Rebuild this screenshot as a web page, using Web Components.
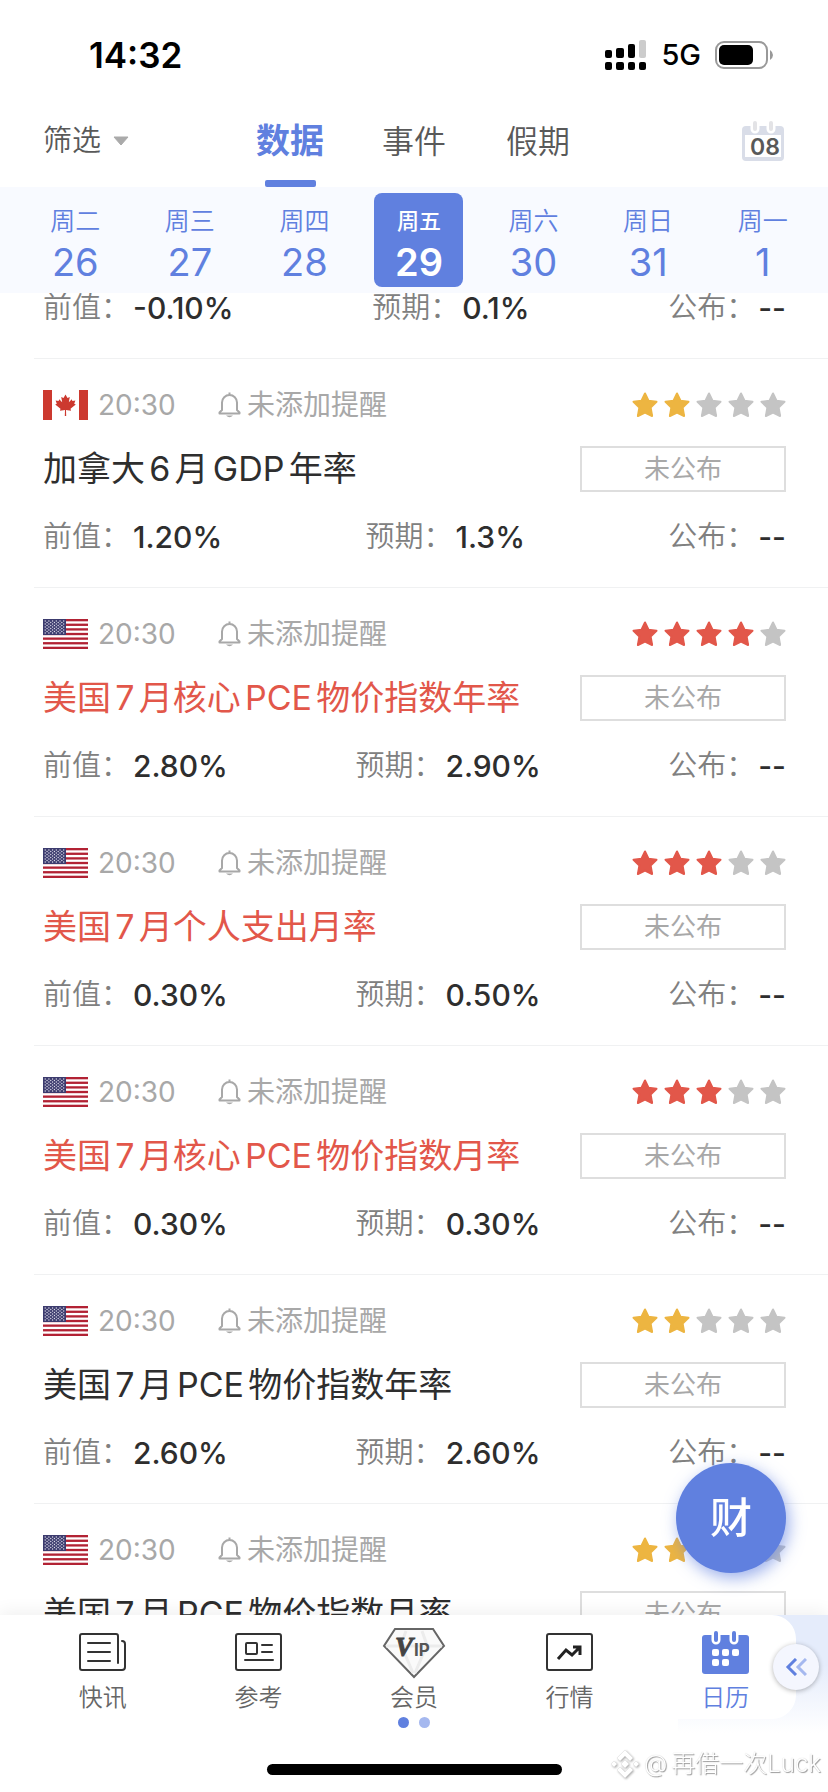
<!DOCTYPE html>
<html lang="zh-CN">
<head>
<meta charset="utf-8">
<meta name="viewport" content="width=device-width, initial-scale=1">
<title>财经日历</title>
<style>
  html, body { margin: 0; height: 100%; }
  body {
    background: #fff; color: #2e2e2e;
    font-family: "Inter", "Noto Sans CJK SC", sans-serif;
    --blue: #6080df; --red: #e2574a; --gold: #edb541; --muted: #a8a8a8;
  }
</style>
</head>
<body>
<calendar-app></calendar-app>

<script>
const define = (name, html, setup) => {
  const template = document.createElement('template');
  template.innerHTML = '<style>*{box-sizing:border-box}button,a{font:inherit;color:inherit;background:none;border:0;padding:0;margin:0;text-decoration:none}svg{display:block}</style>' + html;
  customElements.define(name, class extends HTMLElement {
    constructor() {
      super();
      this.attachShadow({ mode: 'open' }).append(template.content.cloneNode(true));
    }
    connectedCallback() { if (setup) setup(this, this.shadowRoot); }
  });
};

define('status-bar', `
<style>
  :host { display: flex; justify-content: space-between; align-items: center; height: 94px; padding: 16px 55px 0 89px; color: #000; }
  .time { font-size: 35px; font-weight: 600; line-height: 40px; }
  .right { display: flex; align-items: center; gap: 14px; font-size: 29px; font-weight: 500; line-height: 40px; }
</style>
<span class="time">14:32</span>
<span class="right">
  <svg width="42" height="30" viewBox="0 0 42 30" aria-hidden="true">
    <g><rect x="0" y="10" width="7" height="8" rx="2"/><rect x="11" y="8" width="8" height="10" rx="2"/><rect x="23" y="4" width="7" height="14" rx="2"/><rect x="34" y="0" width="7" height="18" rx="2" fill="#ccc"/>
    <rect x="0" y="22" width="7" height="8" rx="2"/><rect x="11" y="22" width="8" height="8" rx="2"/><rect x="23" y="22" width="7" height="8" rx="2"/><rect x="34" y="22" width="7" height="8" rx="2"/></g>
  </svg>
  <span>5G</span>
  <svg width="58" height="28" viewBox="0 0 58 28" aria-hidden="true">
    <rect x="1" y="1" width="51" height="26" rx="8" fill="none" stroke="#999" stroke-width="2"/>
    <rect x="4" y="4" width="34" height="20" rx="5"/><path d="M55 9v10q3-2 3-5t-3-5z" fill="#999"/>
  </svg>
</span>`);

define('top-tabs', `
<style>
  :host { display: grid; grid-template-columns: 1fr 372px 1fr; align-items: center; height: 93px; padding: 0 43px; color: #595959; }
  .filter { justify-self: start; display: flex; align-items: center; gap: 12px; font-size: 29px; font-weight: 350; line-height: 40px; }
  .tabs { display: grid; grid-template-columns: repeat(3, 1fr); align-self: stretch; font-size: 32px; font-weight: 350; }
  .tabs button { position: relative; padding-bottom: 4px; }
  .tabs .on { color: var(--blue); font-size: 34px; font-weight: 600; }
  .tabs .on::after { content: ""; position: absolute; left: 50%; bottom: 0; width: 51px; height: 7px; margin-left: -25px; border-radius: 2px; background: var(--blue); }
  .cal { justify-self: end; }
  text { font: 600 23px "Inter", sans-serif; fill: #595959; }
</style>
<button class="filter">筛选<svg width="16" height="10" viewBox="0 0 16 10"><path d="M1 1h14L8 9z" fill="#aaa" stroke="#aaa" stroke-linejoin="round"/></svg></button>
<div class="tabs" role="tablist">
  <button class="on" role="tab" aria-selected="true">数据</button><button role="tab">事件</button><button role="tab">假期</button>
</div>
<button class="cal" aria-label="今天">
  <svg width="44" height="42" viewBox="0 0 44 42">
    <rect x="1" y="6" width="42" height="35" rx="4" fill="#d9dde8"/><rect x="4" y="15" width="36" height="22" fill="#fff"/>
    <path d="M14 0v9M30 0v9" stroke="#fff" stroke-width="9" stroke-linecap="round"/>
    <path d="M14 3v6M30 3v6" stroke="#e3e3e6" stroke-width="4" stroke-linecap="round"/>
    <text x="24" y="35" text-anchor="middle">08</text>
  </svg>
</button>`);

define('day-cell', `
<style>
  :host { display: flex; justify-content: center; color: var(--blue); }
  button { width: 89px; height: 94px; padding-top: 4px; border-radius: 8px; display: flex; flex-direction: column; align-items: center; justify-content: center; }
  .w { font-size: 25px; font-weight: 350; line-height: 40px; }
  .d { font-size: 38px; line-height: 42px; }
  :host([selected]) button { background: var(--blue); color: #fff; }
  :host([selected]) .w { font-size: 22px; font-weight: 500; }
  :host([selected]) .d { font-weight: 600; }
</style>
<button><span class="w"><slot name="week"></slot></span><span class="d"><slot></slot></span></button>`);

define('day-strip', `
<style>
  :host { display: grid; grid-template-columns: repeat(7, 1fr); align-items: center; height: 106px; padding: 0 8px 0 18px; background: #f8faff; }
</style>
<slot></slot>`);

const STAR = '<svg width="26" height="26" viewBox="0 0 26 26"><path d="M13 1.5l3.5 7.300 8 1-5.900 5.600 1.500 8.600L13 20.500 5.900 24l1.500-8.600L1.500 9.800l8-1z" fill="currentColor" stroke="currentColor" stroke-width="2" stroke-linejoin="round"/></svg>';
define('star-rating', `
<style>
  :host { display: flex; gap: 6px; color: var(--gold); }
  :host([hot]) { color: var(--red); }
  .off { color: #c4c4c4; }
</style>`, (host, root) => {
  const n = +host.getAttribute('value');
  for (let i = 0; i < 5; i++) {
    const s = document.createElement('span');
    if (i >= n) s.className = 'off';
    s.innerHTML = STAR;
    root.append(s);
  }
});

const usFlag = () => {
  let s = '<rect width="45" height="30" fill="#fff"/>';
  for (let i = 0; i < 7; i++) s += `<rect y="${i * 4.62}" width="45" height="2.31" fill="#b22234"/>`;
  s += '<rect width="23" height="16" fill="#3c3b6e"/>';
  for (let r = 0; r < 5; r++) for (let c = 0; c < 6; c++) s += `<circle cx="${2.2 + c * 3.7}" cy="${2 + r * 3}" r=".7" fill="#dcdce8"/>`;
  for (let r = 0; r < 4; r++) for (let c = 0; c < 5; c++) s += `<circle cx="${4.05 + c * 3.7}" cy="${3.5 + r * 3}" r=".7" fill="#dcdce8"/>`;
  return s;
};
const FLAGS = {
  us: usFlag(),
  ca: '<rect width="45" height="30" fill="#fff"/><path d="M0 0h9v30H0zM36 0h9v30h-9z" fill="#cc392f"/><path d="M22.500 4.500l2 3.600 2.300-1.200-1 5.300 3-3 .6 1.700 3-.5-1.200 3.300 1.600.9-5.300 4.200.5 1.900-5-.7.2 6h-1.400l.2-6-5 .7.500-1.900-5.300-4.200 1.600-.9-1.200-3.300 3 .5.600-1.700 3 3-1-5.300 2.300 1.200z" fill="#cc392f"/>'
};
define('country-flag', '<style>:host{display:block}</style><svg width="45" height="30" viewBox="0 0 45 30"></svg>', (host, root) => {
  root.querySelector('svg').innerHTML = FLAGS[host.getAttribute('code')];
});

define('data-pair', `
<style>
  :host { display: flex; gap: 3px; font-size: 29px; font-weight: 350; line-height: 40px; color: #808080; }
  b { font-size: 30px; font-weight: 500; color: #2e2e2e; }
</style>
<span><slot name="label"></slot></span><b><slot></slot></b>`);

define('event-row', `
<style>
  :host { display: block; margin-left: 34px; padding: 26px 42px 30px 9px; border-bottom: 1px solid #f0f1f2; }
  .head { display: flex; align-items: center; height: 40px; color: var(--muted); }
  time { margin-left: 10px; width: 120px; font-size: 28px; line-height: 40px; }
  .bell { display: flex; align-items: center; gap: 6px; font-size: 28px; line-height: 40px; }
  star-rating { margin-left: auto; }
  .main { display: flex; align-items: center; justify-content: space-between; height: 46px; margin: 21px 0 25px; }
  h2 { margin: 0; font-size: 34px; font-weight: 400; line-height: 46px; white-space: nowrap; text-autospace: normal; }
  :host([hot]) h2 { color: var(--red); }
  .state { width: 206px; height: 46px; border: 2px solid #dedede; text-align: center; font-size: 26px; line-height: 42px; color: var(--muted); }
  .vals { display: flex; justify-content: space-between; }
</style>
<div class="top"></div>
<div class="vals">
  <data-pair><span slot="label">前值：</span><slot name="prev"></slot></data-pair>
  <data-pair><span slot="label">预期：</span><slot name="est"></slot></data-pair>
  <data-pair><span slot="label">公布：</span><slot name="actual">--</slot></data-pair>
</div>`, (host, root) => {
  if (!host.querySelector('[slot=prev]')) root.querySelector('.vals').remove();
  if (!host.hasAttribute('flag')) return;
  root.querySelector('.top').innerHTML = `
    <div class="head"><country-flag code="${host.getAttribute('flag')}"></country-flag><time>20:30</time>
      <button class="bell"><svg width="23" height="26" viewBox="0 0 23 26" fill="none" stroke="#a8a8a8" stroke-width="2" stroke-linejoin="round"><path d="M11.500 0.500v2M4 18v-7.500a7.500 7.500 0 0 1 15 0V18l2.500 2.500v1h-20v-1z"/><path d="M8 23.500h7q-3.500 3.500-7 0z" fill="#a8a8a8" stroke="none"/></svg>未添加提醒</button>
      <star-rating value="${host.getAttribute('stars')}" ${host.hasAttribute('hot') ? 'hot' : ''}></star-rating></div>
    <div class="main"><h2><slot></slot></h2><span class="state">未公布</span></div>`;
});

define('event-list', `
<style>
  :host { display: block; flex: 1; min-height: 0; overflow-y: auto; scrollbar-width: none; }
</style>
<slot></slot>`);

const ICONS = {
  news: '<g fill="none" stroke="#333" stroke-width="2" stroke-linejoin="round" stroke-linecap="round"><path d="M40 36V9q0-2-2-2H4Q2 7 2 9v32q0 2 2 2h40q3 0 3-3V17q0-3-3-3M10 16h22M10 25h22M10 34h22"/></g>',
  ref: '<g fill="none" stroke="#333" stroke-width="2" stroke-linejoin="round" stroke-linecap="round"><rect x="2" y="7" width="45" height="36" rx="2"/><rect x="12" y="16" width="11" height="11" rx="1"/><path d="M28 18h10M28 25h10M11 33h28"/></g>',
  market: '<rect x="2" y="7" width="45" height="36" rx="2" fill="none" stroke="#333" stroke-width="2"/><path d="M13 32l8-9 6 5 8-8M28 20h7v8" fill="none" stroke="#222" stroke-width="3"/>',
  calendar: '<rect x="1" y="8" width="47" height="39" rx="3" fill="#6080df"/><path d="M15 5v8M33 5v8" stroke="#fff" stroke-width="9" stroke-linecap="round"/><path d="M15 6v7M33 6v7" stroke="#6080df" stroke-width="4" stroke-linecap="round"/><g fill="#fff"><rect x="11" y="22" width="7" height="7" rx="2"/><rect x="21" y="22" width="7" height="7" rx="2"/><rect x="31" y="22" width="7" height="7" rx="2"/><rect x="11" y="32" width="7" height="7" rx="2"/><rect x="21" y="32" width="7" height="7" rx="2"/></g>'
};
define('nav-item', `
<style>
  :host { display: block; color: #666; }
  a { display: flex; flex-direction: column; align-items: center; font-size: 24px; font-weight: 350; line-height: 36px; }
  .icon { height: 55px; padding-top: 2px; }
  :host([active]) { color: var(--blue); }
  .v { font: italic bold 27px "Liberation Serif", serif; } .ip { font: 700 17px "Inter", sans-serif; }
</style>
<a href="#"><span class="icon"></span><span><slot></slot></span></a>`, (host, root) => {
  const kind = host.getAttribute('icon');
  root.querySelector('.icon').innerHTML = kind === 'vip'
    ? `<svg width="64" height="52" viewBox="0 0 64 52"><path d="M13 2h38l11 17-30 31L2 19z" fill="#fafafa" stroke="#666" stroke-width="2"/><path d="M24 4l-5 14 12 28M40 4l5 14-12 28M4 19h56" fill="none" stroke="#ececec" stroke-width="3"/><text class="v" x="13" y="29" fill="#444" stroke="#444">V</text><text class="ip" x="32" y="29" fill="#555">IP</text></svg>`
    : `<svg width="49" height="50" viewBox="0 0 49 50">${ICONS[kind]}</svg>`;
});

define('bottom-nav', `
<style>
  :host { display: block; position: relative; height: 177px; background: linear-gradient(#e5ecfb 0 50px, #fff 118px) right / 150px 100% no-repeat #fff; box-shadow: 0 -4px 16px #0000000f; }
  :host::before { content: ""; position: absolute; inset: 0 32px auto 0; background: #fff; border-radius: 0 24px 24px 0; height: 104px; }
  nav { position: relative; display: grid; grid-template-columns: repeat(5, 1fr); padding: 10px 25px 0; }
  .dots { position: relative; display: flex; justify-content: center; gap: 10px; padding-top: 1px; }
  .dots i { width: 11px; height: 11px; border-radius: 50%; background: var(--blue); }
  .dots i + i { background: #a5b8ef; }
  .home { position: relative; width: 295px; height: 11px; margin: 36px auto 0; border-radius: 6px; background: #000; }
  .more { position: absolute; right: 9px; top: 29px; width: 46px; height: 46px; border-radius: 50%; background: #f4f6fe; box-shadow: 0 1px 5px #0000004d; display: grid; place-items: center; }
</style>
<nav><slot></slot></nav>
<div class="dots"><i></i><i></i></div>
<div class="home"></div>
<button class="more" aria-label="展开"><svg width="22" height="18" viewBox="0 0 22 18" fill="none" stroke-width="3"><path d="M11 1L3 9l8 8" stroke="#6080df"/><path d="M21 1l-8 8 8 8" stroke="#a5b8ef"/></svg></button>`);

define('float-button', `
<style>
  :host { position: fixed; right: 42px; bottom: 219px; }
  button { width: 110px; height: 110px; border-radius: 50%; background: var(--blue); color: #fff; font-size: 42px; line-height: 110px; font-weight: 500; box-shadow: 3px 5px 16px #6080dfa0; }
</style>
<button><slot></slot></button>`);

define('water-mark', `
<style>
  :host { position: fixed; right: 7px; bottom: 10px; display: flex; align-items: center; gap: 5px; color: #fff; font-size: 24px; font-weight: 300; line-height: 36px; text-shadow: 1px 1px 1px #999, 0 0 1px #ccc; }
  svg { filter: drop-shadow(1px 1px 1px #aaa); }
  .name { display: flex; gap: 4px; }
</style>
<svg width="28" height="28" viewBox="0 0 28 28" fill="#fff" stroke="#ddd" stroke-width=".5"><path d="M14 0l8 8-3 3-5-5-5 5-3-3zM14 28l8-8-3-3-5 5-5-5-3 3zM3 11l3 3-3 3-3-3zM25 11l3 3-3 3-3-3zM14 10l4 4-4 4-4-4z"/></svg>
<span class="name"><span>@</span><span><slot></slot></span></span>`);

define('calendar-app', `
<style>
  :host { display: flex; flex-direction: column; height: 100vh; overflow: hidden; }
  status-bar, top-tabs, day-strip, bottom-nav { flex: none; }
</style>
<status-bar></status-bar>
<top-tabs></top-tabs>
<day-strip>
  <day-cell><span slot="week">周二</span>26</day-cell>
  <day-cell><span slot="week">周三</span>27</day-cell>
  <day-cell><span slot="week">周四</span>28</day-cell>
  <day-cell selected><span slot="week">周五</span>29</day-cell>
  <day-cell><span slot="week">周六</span>30</day-cell>
  <day-cell><span slot="week">周日</span>31</day-cell>
  <day-cell><span slot="week">周一</span>1</day-cell>
</day-strip>
<event-list>
  <event-row><span slot="prev">-0.10%</span><span slot="est">0.1%</span></event-row>
  <event-row flag="ca" stars="2">加拿大6月GDP年率<span slot="prev">1.20%</span><span slot="est">1.3%</span></event-row>
  <event-row flag="us" stars="4" hot>美国7月核心PCE物价指数年率<span slot="prev">2.80%</span><span slot="est">2.90%</span></event-row>
  <event-row flag="us" stars="3" hot>美国7月个人支出月率<span slot="prev">0.30%</span><span slot="est">0.50%</span></event-row>
  <event-row flag="us" stars="3" hot>美国7月核心PCE物价指数月率<span slot="prev">0.30%</span><span slot="est">0.30%</span></event-row>
  <event-row flag="us" stars="2">美国7月PCE物价指数年率<span slot="prev">2.60%</span><span slot="est">2.60%</span></event-row>
  <event-row flag="us" stars="2">美国7月PCE物价指数月率</event-row>
</event-list>
<bottom-nav>
  <nav-item icon="news">快讯</nav-item>
  <nav-item icon="ref">参考</nav-item>
  <nav-item icon="vip">会员</nav-item>
  <nav-item icon="market">行情</nav-item>
  <nav-item icon="calendar" active>日历</nav-item>
</bottom-nav>
<float-button>财</float-button>
<water-mark>再借一次Luck</water-mark>`, (host, root) => {
  root.querySelector('event-list').scrollTop = 31;
});
</script>
</body>
</html>
